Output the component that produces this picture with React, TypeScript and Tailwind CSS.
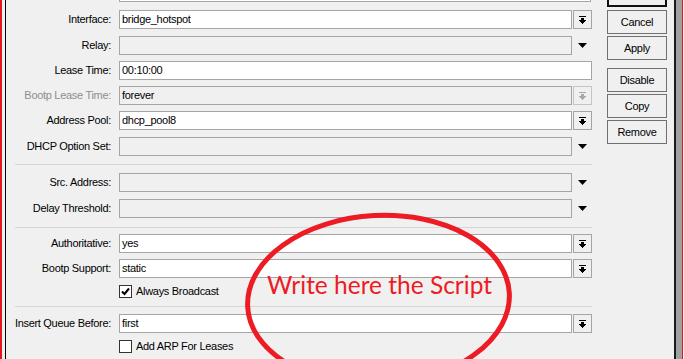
const font = { fontFamily: "Tahoma, 'Liberation Sans', Arial, sans-serif" };

function BoxArrow({ disabled }: { disabled?: boolean }) {
  const c = disabled ? "#a8a8a8" : "#000";
  return (
    <div className={`w-[19px] h-[19px] border flex items-center justify-center bg-[#f0f0f0] ${disabled ? "border-[#c4c4c4]" : "border-[#a5a5a5]"}`}>
      <svg width="7" height="8" viewBox="0 0 7 8" shapeRendering="crispEdges">
        <rect x="0" y="0" width="7" height="1" fill={c} />
        <rect x="2" y="2" width="3" height="2" fill={c} />
        <polygon points="0,4 7,4 3.5,7.6" fill={c} />
      </svg>
    </div>
  );
}

function Triangle() {
  return (
    <div className="w-[19px] h-[19px] flex items-center justify-center">
      <svg width="9" height="5" viewBox="0 0 9 5">
        <polygon points="0,0 9,0 4.5,5" fill="#000" />
      </svg>
    </div>
  );
}

type RowProps = {
  label: string;
  value?: string;
  white?: boolean;
  tail?: "box" | "tri" | "boxoff" | "none";
  dim?: boolean;
  mt: string;
};

function Row({ label, value, white, tail = "none", dim, mt }: RowProps) {
  return (
    <div className={`flex items-center h-[19px] ${mt}`}>
      <div className={`w-[105px] text-right text-[11px] tracking-[-0.3px] whitespace-nowrap ${dim ? "text-[#8e8e8e]" : "text-black"}`}>
        {label}:
      </div>
      <div className="ml-[8px] w-[473px] flex gap-[1px]">
        <div className={`flex-1 h-[19px] border border-[#a5a5a5] pl-[2px] text-[11px] tracking-[-0.3px] leading-[17px] text-black ${white ? "bg-white" : "bg-[#f0f0f0]"}`}>
          {value}
        </div>
        {tail === "box" && <BoxArrow />}
        {tail === "boxoff" && <BoxArrow disabled />}
        {tail === "tri" && <Triangle />}
      </div>
    </div>
  );
}

function Check({ label, checked, mt }: { label: string; checked?: boolean; mt: string }) {
  return (
    <div className={`flex items-center h-[13px] ${mt}`}>
      <div className="ml-[113px] w-[13px] h-[13px] border border-[#333] bg-white flex items-center justify-center">
        {checked && (
          <svg width="9" height="9" viewBox="0 0 9 9">
            <polyline points="1,4.5 3.5,7 8,1.5" fill="none" stroke="#000" strokeWidth="2" />
          </svg>
        )}
      </div>
      <span className="ml-[4px] text-[11px] tracking-[-0.3px] text-black whitespace-nowrap">{label}</span>
    </div>
  );
}

function Sep({ mt }: { mt: string }) {
  return <div className={`ml-[9px] w-[577px] h-[1px] bg-[#d6d6d6] ${mt}`} />;
}

function Btn({ label, mt, main }: { label?: string; mt: string; main?: boolean }) {
  return (
    <div className={`w-[60px] h-[24px] flex items-center justify-center bg-[#f0f0f0] text-[11px] tracking-[-0.3px] text-black ${mt} ${main ? "border-2 border-[#111]" : "border border-[#707070]"}`}>
      {label}
    </div>
  );
}

export default function App() {
  return (
    <div className="relative w-[684px] h-[359px] overflow-hidden flex bg-[#f0f0f0]" style={font}>
      <div className="w-[2px] bg-[#e3171e]" />
      <div className="w-[3px] bg-[#f0f0f0]" />
      <div className="w-[1px] bg-black" />

      <div className="flex-1 flex">
        <div className="w-[586px] flex flex-col">
          {/* name field, mostly scrolled off the top */}
          <div className="flex h-[19px] mt-[-17px]">
            <div className="ml-[113px] w-[472px] h-[19px] border border-[#a5a5a5] bg-white" />
          </div>
          <Row label="Interface" value="bridge_hotspot" white tail="box" mt="mt-[8px]" />
          <Row label="Relay" tail="tri" mt="mt-[7px]" />
          <div className="flex items-center h-[19px] mt-[6px]">
            <div className="w-[105px] text-right text-[11px] tracking-[-0.3px] text-black">Lease Time:</div>
            <div className="ml-[8px] w-[473px] h-[19px] border border-[#a5a5a5] bg-white pl-[2px] text-[11px] tracking-[-0.3px] leading-[17px]">00:10:00</div>
          </div>
          <Row label="Bootp Lease Time" value="forever" tail="boxoff" dim mt="mt-[6px]" />
          <Row label="Address Pool" value="dhcp_pool8" white tail="box" mt="mt-[6px]" />
          <Row label="DHCP Option Set" tail="tri" mt="mt-[7px]" />
          <Sep mt="mt-[8px]" />
          <Row label="Src. Address" tail="tri" mt="mt-[8px]" />
          <Row label="Delay Threshold" tail="tri" mt="mt-[7px]" />
          <Sep mt="mt-[9px]" />
          <Row label="Authoritative" value="yes" white tail="box" mt="mt-[6px]" />
          <Row label="Bootp Support" value="static" white tail="box" mt="mt-[6px]" />
          <Check label="Always Broadcast" checked mt="mt-[7px]" />
          <Sep mt="mt-[8px]" />
          <Row label="Insert Queue Before" value="first" white tail="box" mt="mt-[7px]" />
          <Check label="Add ARP For Leases" mt="mt-[7px]" />
        </div>

        <div className="ml-[15px] flex flex-col">
          <Btn main mt="mt-[-17px]" />
          <Btn label="Cancel" mt="mt-[3px]" />
          <Btn label="Apply" mt="mt-[2px]" />
          <Btn label="Disable" mt="mt-[8px]" />
          <Btn label="Copy" mt="mt-[2px]" />
          <Btn label="Remove" mt="mt-[2px]" />
        </div>
      </div>

      <div className="w-[2px] bg-[#1a1a1a]" />
      <div className="w-[6px] bg-[#a0a0a0]" />
      <div className="w-[1px] bg-[#e3171e]" />
      <div className="w-[1px] bg-[#f4f4f4]" />

      <svg className="absolute left-0 top-0 pointer-events-none" width="684" height="359">
        <ellipse cx="378.5" cy="300" rx="131" ry="84.5" fill="none" stroke="#ed1c24" strokeWidth="5" transform="rotate(-3 378.5 300)" />
      </svg>
      <div
        className="absolute left-[267px] top-[270px] text-[24.5px] leading-[30px] text-[#ed1c24] whitespace-nowrap"
        style={{ fontFamily: "Lato, 'Open Sans', sans-serif" }}
      >
        Write here the Script
      </div>
    </div>
  );
}
